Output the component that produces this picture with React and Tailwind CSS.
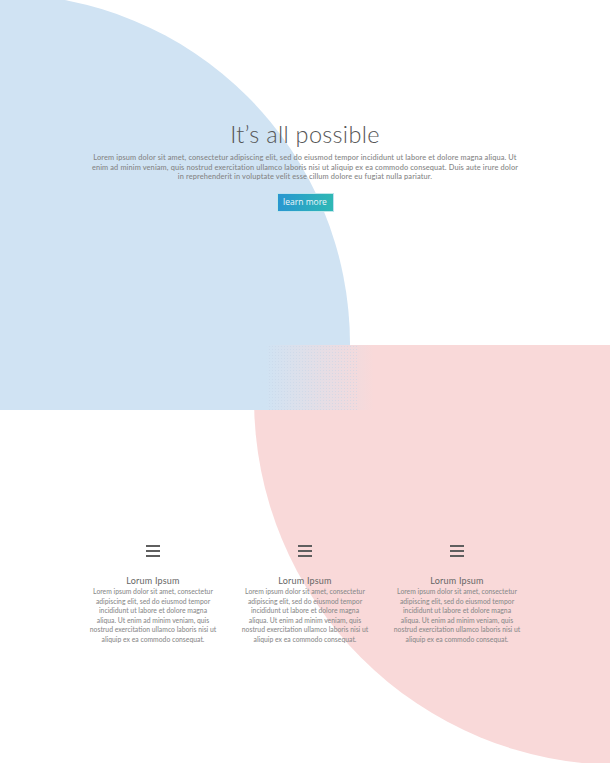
import React from 'react';

const lorem =
  'Lorem ipsum dolor sit amet, consectetur adipiscing elit, sed do eiusmod tempor incididunt ut labore et dolore magna aliqua. Ut enim ad minim veniam, quis nostrud exercitation ullamco laboris nisi ut aliquip ex ea commodo consequat. Duis aute irure dolor in reprehenderit in voluptate velit esse cillum dolore eu fugiat nulla pariatur.';

const blurb =
  'Lorem ipsum dolor sit amet, consectetur adipiscing elit, sed do eiusmod tempor incididunt ut labore et dolore magna aliqua. Ut enim ad minim veniam, quis nostrud exercitation ullamco laboris nisi ut aliquip ex ea commodo consequat.';

const MenuIcon = () => (
  <div className="flex flex-col gap-[3px] w-[14px]">
    <span className="block h-[2px] bg-[#5f5f5f]" />
    <span className="block h-[2px] bg-[#5f5f5f]" />
    <span className="block h-[2px] bg-[#5f5f5f]" />
  </div>
);

const Feature = () => (
  <div className="flex flex-col items-center text-center">
    <MenuIcon />
    <h3 className="mt-[18px] text-[9px] leading-[12px] text-[#666] font-normal tracking-[0.2px]">Lorum Ipsum</h3>
    <p className="text-[6.8px] leading-[9.6px] text-[#8c8c8c] font-medium">{blurb}</p>
  </div>
);

export default function App() {
  return (
    <div className="w-full min-h-screen bg-white overflow-hidden font-['Lato',sans-serif]">
      {/* Hero */}
      <section className="relative h-[410px] overflow-hidden">
        <div className="absolute left-[-350px] top-[-6px] w-[700px] h-[700px] rounded-full bg-[#d0e3f3]" />
        <div className="relative flex flex-col items-center pt-[119px]">
          <h1 className="text-[23.5px] leading-[30px] text-[#555] font-light tracking-[0.3px]">It’s all possible</h1>
          <p className="mt-[4px] w-[432px] text-center text-[7.4px] leading-[9.6px] text-[#858585] font-medium tracking-[0.12px]">
            {lorem}
          </p>
          <button className="mt-[11px] w-[57px] h-[19px] border border-white/70 bg-linear-to-r from-[#2a96d0] to-[#2fb8b4] text-[#eef6fa] text-[8.5px] font-['Open_Sans',sans-serif]">
            learn more
          </button>
        </div>
      </section>

      {/* Features */}
      <section className="relative mt-[-65px] h-[430px] overflow-hidden">
        <div className="absolute left-[254px] top-[-312px] w-[732px] h-[732px] rounded-full bg-[#f9d9d9]" />
        <div className="absolute left-[254px] top-0 w-[120px] h-[65px] bg-linear-to-r from-[#d0e3f3] from-10% to-transparent" />
        <div className="absolute left-[268px] top-0 w-[90px] h-[65px] opacity-50 bg-[radial-gradient(#c3d3e6_0.6px,transparent_0.8px)] bg-size-[3px_3px]" />
        <div className="relative grid grid-cols-3 gap-[24px] w-[432px] mx-auto pt-[200px]">
          <Feature />
          <Feature />
          <Feature />
        </div>
      </section>
    </div>
  );
}
